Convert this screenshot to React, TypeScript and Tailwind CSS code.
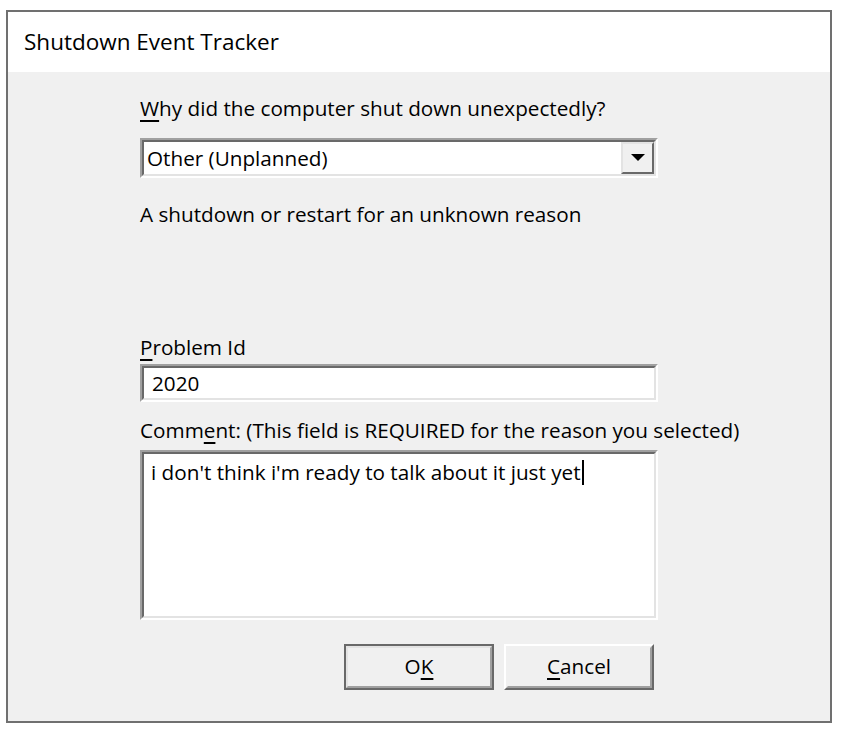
import React from 'react';

const font = { fontFamily: '"Open Sans", "Noto Sans", sans-serif' };

const Sunken: React.FC<{ className?: string; children?: React.ReactNode }> = ({
  className,
  children,
}) => (
  <div
    className={`border-2 border-t-[#a0a0a0] border-l-[#a0a0a0] border-r-white border-b-white ${className ?? ''}`}
  >
    <div className="flex h-full w-full border-2 border-t-[#696969] border-l-[#696969] border-r-[#e3e3e3] border-b-[#e3e3e3] bg-white">
      {children}
    </div>
  </div>
);

const Mn: React.FC<{ children: React.ReactNode }> = ({ children }) => (
  <span className="underline decoration-[2px] underline-offset-[4px]">{children}</span>
);

export default function App() {
  return (
    <div className="min-h-[734px] w-[844px] bg-white pl-[6px] pt-[10px] text-black" style={font}>
      <div className="flex h-[713px] w-[826px] flex-col border-2 border-[#707070]">
        {/* title bar */}
        <div className="flex h-[60px] items-center bg-white pl-[16px] text-[22.5px]">
          Shutdown Event Tracker
        </div>

        {/* body */}
        <div className="flex flex-1 flex-col bg-[#f0f0f0] pl-[132px] text-[20.7px]">
          <div className="mt-[22px] h-[28px] leading-[28px]">
            <Mn>W</Mn>hy did the computer shut down unexpectedly?
          </div>

          <Sunken className="mt-[16px] h-[40px] w-[518px]">
            <div className="flex flex-1 items-center pl-[3px] leading-none">Other (Unplanned)</div>
            <div className="flex h-[32px] w-[33px] items-center justify-center border-2 border-t-[#e3e3e3] border-l-[#e3e3e3] border-r-[#696969] border-b-[#696969] bg-[#f0f0f0]">
              <svg width="14" height="8" viewBox="0 0 14 8">
                <path d="M0 0 H14 L7 7 Z" fill="#000" />
              </svg>
            </div>
          </Sunken>

          <div className="mt-[22px] h-[28px] leading-[28px]">
            A shutdown or restart for an unknown reason
          </div>

          <div className="mt-[105px] h-[28px] leading-[28px]">
            <Mn>P</Mn>roblem Id
          </div>

          <Sunken className="mt-[3px] h-[38px] w-[518px]">
            <div className="flex items-center pl-[8px] leading-none">2020</div>
          </Sunken>

          <div className="mt-[14px] h-[28px] leading-[28px]">
            Comm<Mn>e</Mn>nt: (This field is REQUIRED for the reason you selected)
          </div>

          <Sunken className="mt-[6px] h-[170px] w-[518px]">
            <div className="flex items-start pl-[7px] pt-[4px] leading-[28px]">
              i don't think i'm ready to talk about it just yet
              <span className="ml-[1px] mt-[2px] inline-block h-[25px] w-[2px] bg-black" />
            </div>
          </Sunken>

          <div className="mt-[24px] flex w-[518px] justify-end gap-[10px] pr-[4px]">
            <button className="h-[46px] w-[150px] border-2 border-[#696969] bg-[#f0f0f0] p-0">
              <div className="flex h-full w-full items-center justify-center border-2 border-t-[#e3e3e3] border-l-[#e3e3e3] border-r-[#a0a0a0] border-b-[#a0a0a0]">
                O<Mn>K</Mn>
              </div>
            </button>
            <button className="h-[46px] w-[150px] border-2 border-t-white border-l-white border-r-[#696969] border-b-[#696969] bg-[#f0f0f0] p-0">
              <div className="flex h-full w-full items-center justify-center border-2 border-t-[#f0f0f0] border-l-[#f0f0f0] border-r-[#a0a0a0] border-b-[#a0a0a0]">
                <Mn>C</Mn>ancel
              </div>
            </button>
          </div>
        </div>
      </div>
    </div>
  );
}
